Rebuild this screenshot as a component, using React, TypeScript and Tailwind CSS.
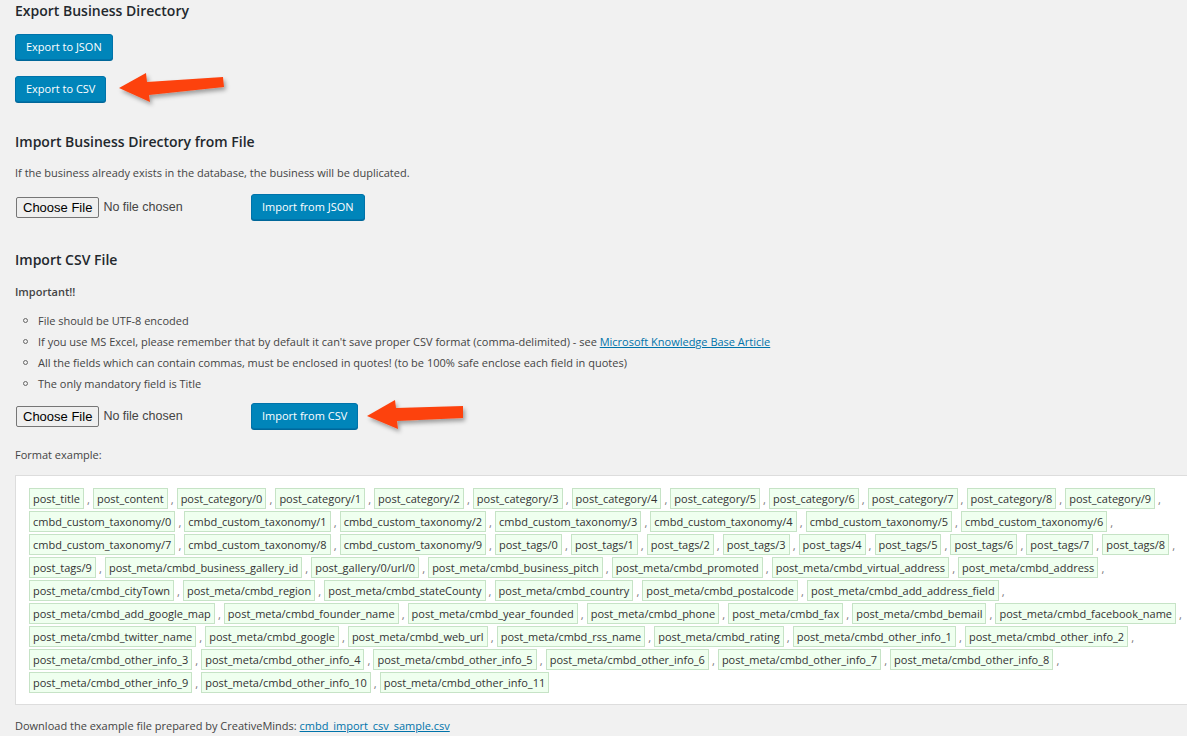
const font = { fontFamily: '"Open Sans", "Noto Sans", sans-serif' };

const rows: string[][] = [
  ["post_title", "post_content", "post_category/0", "post_category/1", "post_category/2", "post_category/3", "post_category/4", "post_category/5", "post_category/6", "post_category/7", "post_category/8", "post_category/9"],
  ["cmbd_custom_taxonomy/0", "cmbd_custom_taxonomy/1", "cmbd_custom_taxonomy/2", "cmbd_custom_taxonomy/3", "cmbd_custom_taxonomy/4", "cmbd_custom_taxonomy/5", "cmbd_custom_taxonomy/6"],
  ["cmbd_custom_taxonomy/7", "cmbd_custom_taxonomy/8", "cmbd_custom_taxonomy/9", "post_tags/0", "post_tags/1", "post_tags/2", "post_tags/3", "post_tags/4", "post_tags/5", "post_tags/6", "post_tags/7", "post_tags/8"],
  ["post_tags/9", "post_meta/cmbd_business_gallery_id", "post_gallery/0/url/0", "post_meta/cmbd_business_pitch", "post_meta/cmbd_promoted", "post_meta/cmbd_virtual_address", "post_meta/cmbd_address"],
  ["post_meta/cmbd_cityTown", "post_meta/cmbd_region", "post_meta/cmbd_stateCounty", "post_meta/cmbd_country", "post_meta/cmbd_postalcode", "post_meta/cmbd_add_address_field"],
  ["post_meta/cmbd_add_google_map", "post_meta/cmbd_founder_name", "post_meta/cmbd_year_founded", "post_meta/cmbd_phone", "post_meta/cmbd_fax", "post_meta/cmbd_bemail", "post_meta/cmbd_facebook_name"],
  ["post_meta/cmbd_twitter_name", "post_meta/cmbd_google", "post_meta/cmbd_web_url", "post_meta/cmbd_rss_name", "post_meta/cmbd_rating", "post_meta/cmbd_other_info_1", "post_meta/cmbd_other_info_2"],
  ["post_meta/cmbd_other_info_3", "post_meta/cmbd_other_info_4", "post_meta/cmbd_other_info_5", "post_meta/cmbd_other_info_6", "post_meta/cmbd_other_info_7", "post_meta/cmbd_other_info_8"],
  ["post_meta/cmbd_other_info_9", "post_meta/cmbd_other_info_10", "post_meta/cmbd_other_info_11"],
];

function BlueButton({ label }: { label: string }) {
  return (
    <button className="h-[26px] px-[10px] rounded-[3px] bg-[#0085ba] border border-[#0073aa] text-white text-[11px] leading-[24px] shadow-[0_1px_0_#006799]">
      {label}
    </button>
  );
}

function FileRow({ label }: { label: string }) {
  return (
    <div className="flex items-center h-[26px]">
      <div className="w-[236px] flex items-center pl-[1px]">
        <span
          className="h-[21px] px-[6px] border border-[#767676] rounded-[2px] bg-[#efefef] text-black text-[13px] leading-[19px]"
          style={{ fontFamily: '"Liberation Sans", Arial, sans-serif' }}
        >
          Choose File
        </span>
        <span className="ml-[4px] text-[12.5px] text-[#444]" style={{ fontFamily: '"Liberation Sans", Arial, sans-serif' }}>
          No file chosen
        </span>
      </div>
      <BlueButton label={label} />
    </div>
  );
}

function Heading({ children, mt }: { children: string; mt: string }) {
  return <h2 className={`${mt} h-[22px] leading-[22px] text-[14px] font-semibold text-[#23282d]`}>{children}</h2>;
}

export default function App() {
  return (
    <div className="relative w-[1187px] h-[736px] overflow-hidden bg-[#f1f1f1] text-[#444] text-[11px]" style={font}>
      <div className="pl-[15px]">
        <Heading mt="mt-0">Export Business Directory</Heading>
        <div className="mt-[12px]">
          <BlueButton label="Export to JSON" />
        </div>
        <div className="mt-[16px]">
          <BlueButton label="Export to CSV" />
        </div>

        <Heading mt="mt-[29px]">Import Business Directory from File</Heading>
        <p className="mt-[11px] leading-[18px]">If the business already exists in the database, the business will be duplicated.</p>
        <div className="mt-[12px]">
          <FileRow label="Import from JSON" />
        </div>

        <Heading mt="mt-[29px]">Import CSV File</Heading>
        <p className="mt-[12px] leading-[18px] font-semibold">Important!!</p>
        <ul className="mt-[9px] ml-[8px]">
          {[
            "File should be UTF-8 encoded",
            null,
            "All the fields which can contain commas, must be enclosed in quotes! (to be 100% safe enclose each field in quotes)",
            "The only mandatory field is Title",
          ].map((t, i) => (
            <li key={i} className="flex items-center h-[21px] leading-[21px]">
              <span className="w-[5px] h-[5px] rounded-full border border-[#666] mr-[10px]" />
              {t === null ? (
                <span>
                  If you use MS Excel, please remember that by default it can&apos;t save proper CSV format (comma-delimited) - see{" "}
                  <a className="text-[#0073aa] underline">Microsoft Knowledge Base Article</a>
                </span>
              ) : (
                <span>{t}</span>
              )}
            </li>
          ))}
        </ul>
        <div className="mt-[9px]">
          <FileRow label="Import from CSV" />
        </div>

        <p className="mt-[17px] leading-[18px]">Format example:</p>

        <div className="mt-[11px] w-[1200px] bg-white border border-[#dddddd] pt-[11px] pb-[10px] pl-[13px]">
          {rows.map((row, ri) => (
            <div key={ri} className="flex items-center h-[23px] whitespace-nowrap">
              {row.map((tag, ti) => {
                const last = ri === rows.length - 1 && ti === row.length - 1;
                return (
                  <div key={tag} className="flex items-center">
                    <span className="h-[21px] px-[3px] bg-[#efffef] border border-[#c6e3c6] text-[11px] leading-[19px] text-[#333]">
                      {tag}
                    </span>
                    {!last && <span className="w-[9px] pt-[4px] text-center text-[#777] text-[11px]">,</span>}
                  </div>
                );
              })}
            </div>
          ))}
        </div>

        <p className="mt-[12px] leading-[18px]">
          Download the example file prepared by CreativeMinds:{" "}
          <a className="text-[#0073aa] underline">cmbd_import_csv_sample.csv</a>
        </p>
      </div>

      <svg className="absolute left-0 top-0 pointer-events-none" width="1187" height="736">
        <defs>
          <filter id="sh" x="-20%" y="-30%" width="140%" height="160%">
            <feDropShadow dx="2" dy="3" stdDeviation="2" floodColor="#000" floodOpacity="0.35" />
          </filter>
        </defs>
        <polygon
          points="119,88 146,73 147,82 223,77 224,87 149,95 150,102"
          fill="#fd4210"
          filter="url(#sh)"
        />
        <polygon
          points="367,416 395,400 396,408 463,406 463,418 397,421 398,429"
          fill="#fd4210"
          filter="url(#sh)"
        />
      </svg>
    </div>
  );
}
